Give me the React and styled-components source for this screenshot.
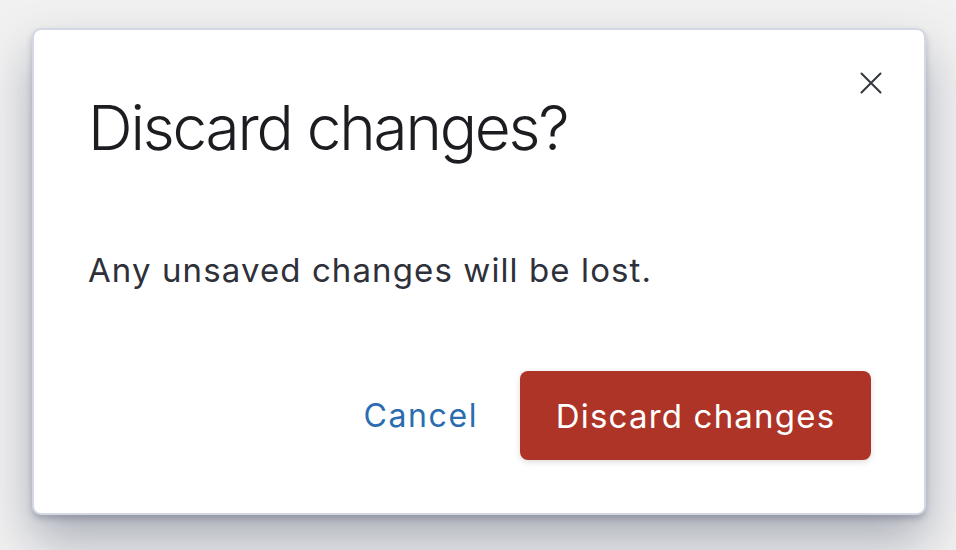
import React from "react";
import styled, { createGlobalStyle } from "styled-components";

const Global = createGlobalStyle`
  html, body { margin: 0; padding: 0; }
  body {
    background: #f1f1f1;
    font-family: Inter, "Noto Sans", sans-serif;
    width: 956px;
    height: 550px;
    overflow: hidden;
  }
`;

const Page = styled.div`
  padding: 28px 30px 0 32px;
  box-sizing: border-box;
  width: 956px;
  height: 550px;
`;

const Dialog = styled.div`
  position: relative;
  box-sizing: border-box;
  width: 894px;
  height: 487px;
  background: #ffffff;
  border: 2px solid #d3d8e4;
  border-radius: 9px;
  box-shadow: 0 4px 6px rgba(40, 50, 80, 0.25), 0 26px 50px rgba(40, 50, 80, 0.35);
  padding: 61px 53px 53px 54px;
  display: flex;
  flex-direction: column;
`;

const CloseButton = styled.button`
  position: absolute;
  top: 37px;
  right: 37px;
  width: 32px;
  height: 32px;
  padding: 0;
  border: none;
  background: transparent;
  display: flex;
  align-items: center;
  justify-content: center;
  cursor: pointer;
`;

const Title = styled.h1`
  margin: 0;
  font-family: Inter, sans-serif;
  font-weight: 300;
  font-size: 62px;
  line-height: 74px;
  color: #1c1d21;
  letter-spacing: -2.2px;
`;

const Message = styled.p`
  margin: 81px 0 0;
  font-size: 33px;
  line-height: 49px;
  color: #2e303a;
  letter-spacing: 1.1px;
`;

const Actions = styled.div`
  margin-top: auto;
  display: flex;
  justify-content: flex-end;
  align-items: center;
  gap: 42px;
`;

const LinkButton = styled.button`
  border: none;
  background: transparent;
  padding: 0;
  font-family: Inter, sans-serif;
  font-size: 32px;
  letter-spacing: 1.6px;
  color: #2b6cb0;
  cursor: pointer;
`;

const DangerButton = styled.button`
  width: 351px;
  height: 89px;
  border: none;
  border-radius: 8px;
  background: #ad3427;
  color: #ffffff;
  font-family: Inter, sans-serif;
  font-size: 33px;
  letter-spacing: 1.2px;
  box-shadow: 0 2px 6px rgba(0, 0, 0, 0.14);
  cursor: pointer;
`;

export default function App() {
  return (
    <Page>
      <Global />
      <Dialog>
        <CloseButton aria-label="Close">
          <svg width="24" height="24" viewBox="0 0 24 24">
            <path d="M2.5 2.5 L21.5 21.5 M21.5 2.5 L2.5 21.5" stroke="#33363d" strokeWidth="2" strokeLinecap="round" />
          </svg>
        </CloseButton>
        <Title>Discard changes?</Title>
        <Message>Any unsaved changes will be lost.</Message>
        <Actions>
          <LinkButton>Cancel</LinkButton>
          <DangerButton>Discard changes</DangerButton>
        </Actions>
      </Dialog>
    </Page>
  );
}
